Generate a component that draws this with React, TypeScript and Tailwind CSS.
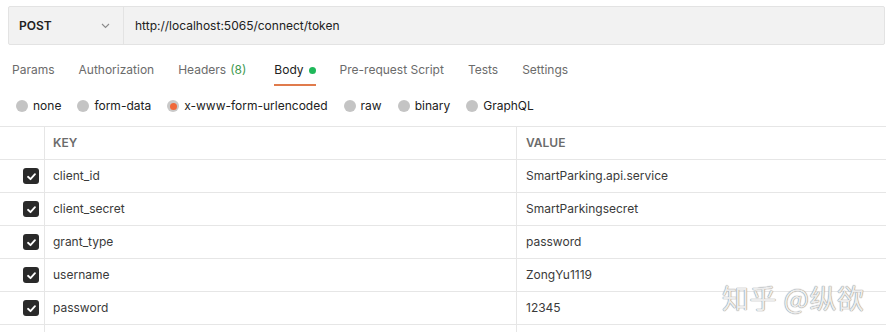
import React from "react";

const tabs = [
  { label: "Params" },
  { label: "Authorization" },
  { label: "Headers", extra: "(8)" },
  { label: "Body", active: true },
  { label: "Pre-request Script" },
  { label: "Tests" },
  { label: "Settings" },
];

const radios = [
  { label: "none" },
  { label: "form-data" },
  { label: "x-www-form-urlencoded", active: true },
  { label: "raw" },
  { label: "binary" },
  { label: "GraphQL" },
];

const rows = [
  ["client_id", "SmartParking.api.service"],
  ["client_secret", "SmartParkingsecret"],
  ["grant_type", "password"],
  ["username", "ZongYu1119"],
  ["password", "12345"],
];

function Check() {
  return (
    <div className="w-[16px] h-[16px] rounded-[3px] bg-[#2a2a2a] flex items-center justify-center">
      <svg width="11" height="11" viewBox="0 0 12 12" fill="none">
        <path d="M2.2 6.3 L4.9 8.9 L9.8 3.4" stroke="#fff" strokeWidth="2" strokeLinecap="round" strokeLinejoin="round" />
      </svg>
    </div>
  );
}

export default function App() {
  return (
    <div
      className="relative w-[886px] h-[332px] bg-white overflow-hidden text-[12px]"
      style={{ fontFamily: "Inter, 'Noto Sans', sans-serif" }}
    >
      <div className="pt-[6px] pl-2 pr-[1px]">
        <div className="h-[39px] bg-[#f2f2f2] border border-[#e3e3e3] rounded-[2px] flex items-center">
          <div className="w-[115px] h-full flex items-center justify-between pl-[10px] pr-[13px] border-r border-[#e3e3e3]">
            <span className="font-semibold text-[#212121] text-[12px]">POST</span>
            <svg width="9" height="6" viewBox="0 0 9 6" fill="none">
              <path d="M1 1 L4.5 4.5 L8 1" stroke="#8a8a8a" strokeWidth="1.1" />
            </svg>
          </div>
          <span className="pl-[11px] text-[#212121]">http://localhost:5065/connect/token</span>
        </div>
      </div>

      <div className="flex mt-[11px] pl-[12px] gap-[24px]">
        {tabs.map((t) => (
          <div
            key={t.label}
            className={
              "h-[30px] flex items-center gap-[4px] border-b-2 " +
              (t.active ? "ml-[4px] border-[#e07b4c] text-[#212121]" : "border-transparent text-[#6b6b6b]")
            }
          >
            <span>{t.label}</span>
            {t.extra && <span className="text-[#3f9a52]">{t.extra}</span>}
            {t.active && <span className="w-[7px] h-[7px] rounded-full bg-[#1fb85a] ml-[1px]" />}
          </div>
        ))}
      </div>

      <div className="h-[39px] flex items-center pl-[16px] gap-[16px] text-[#212121] pt-[1px]">
        {radios.map((r) => (
          <div key={r.label} className="flex items-center gap-[5px]">
            <span
              className={
                "w-[12px] h-[12px] rounded-full flex items-center justify-center " +
                (r.active ? "bg-[#c9c9c9]" : "bg-[#c4c4c4]")
              }
            >
              {r.active && <span className="w-[7px] h-[7px] rounded-full bg-[#f0683a]" />}
            </span>
            <span>{r.label}</span>
          </div>
        ))}
      </div>

      <div className="mt-[1px] border-t border-[#e6e6e6]">
        <div className="flex h-[33px] border-b border-[#e6e6e6] text-[12px] font-semibold text-[#6b6b6b]">
          <div className="w-[45px] border-r border-[#e6e6e6]" />
          <div className="w-[472px] border-r border-[#e6e6e6] flex items-center pl-[8px]">KEY</div>
          <div className="flex-1 flex items-center pl-[9px]">VALUE</div>
        </div>
        {rows.map(([k, v]) => (
          <div key={k} className="flex h-[33px] border-b border-[#e6e6e6] text-[#3a3a3a]">
            <div className="w-[45px] border-r border-[#e6e6e6] flex items-center justify-end pr-[5px]">
              <Check />
            </div>
            <div className="w-[472px] border-r border-[#e6e6e6] flex items-center pl-[8px]">{k}</div>
            <div className="flex-1 flex items-center pl-[9px]">{v}</div>
          </div>
        ))}
        <div className="flex h-[33px]">
          <div className="w-[45px] border-r border-[#e6e6e6]" />
          <div className="w-[472px] border-r border-[#e6e6e6]" />
        </div>
      </div>

      <div
        className="absolute left-[722px] top-[278px] text-[27px] text-[#ececec] tracking-[0.5px]"
        style={{
          fontFamily: "'Noto Sans CJK SC', 'Noto Sans', sans-serif",
          textShadow: "0 0 1px #8a8a8a, 0 0 1px #8a8a8a",
        }}
      >
        知乎 @纵欲
      </div>
    </div>
  );
}
